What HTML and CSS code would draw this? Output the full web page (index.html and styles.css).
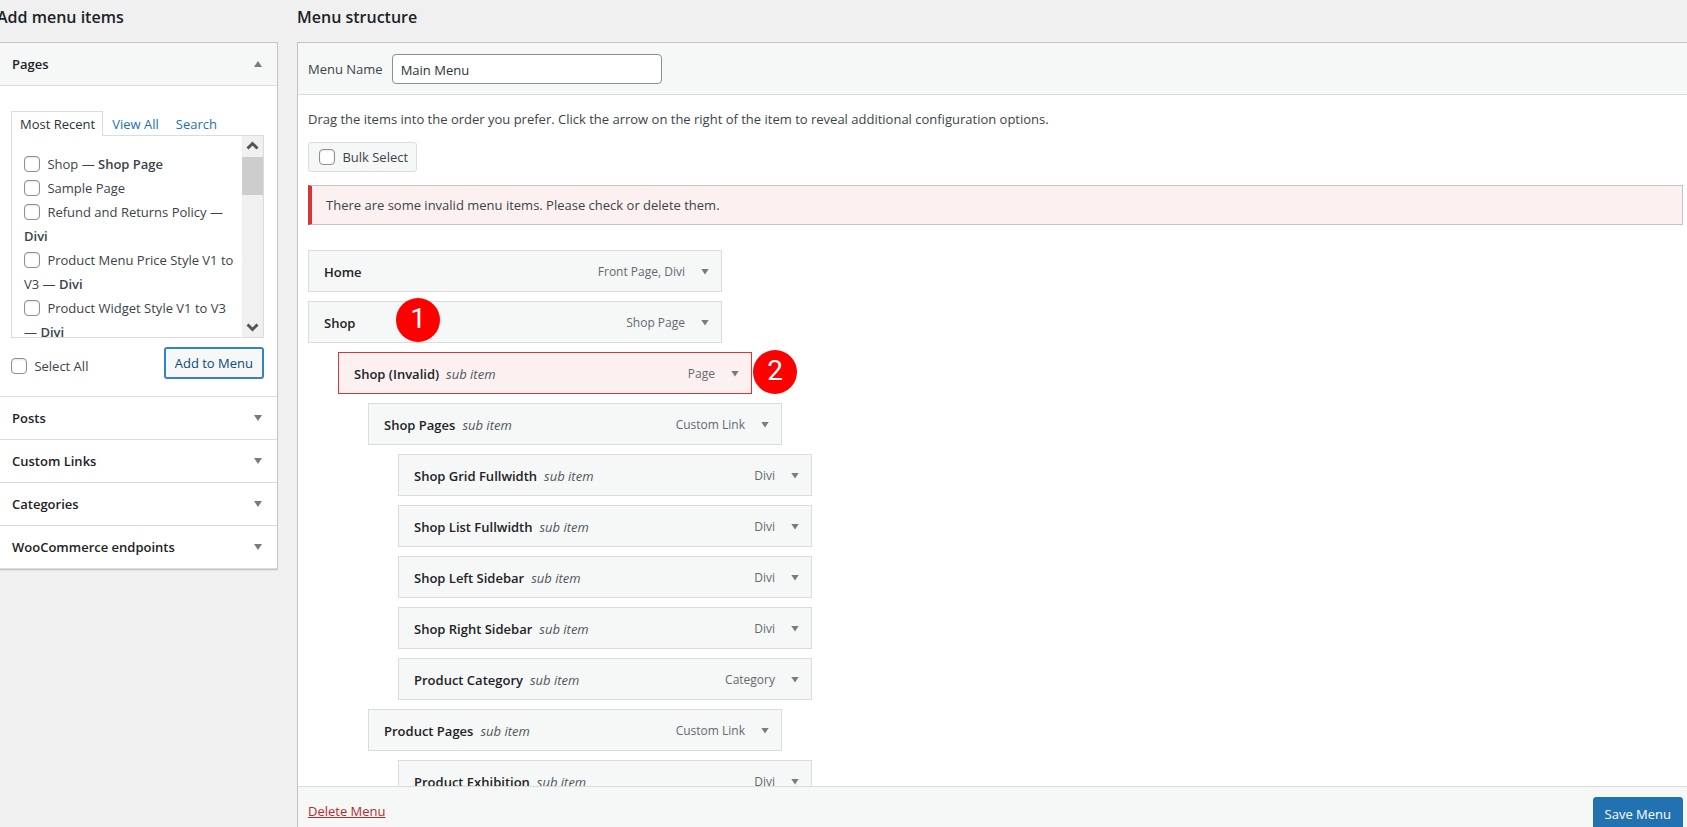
FILE: index.html
```html
<!DOCTYPE html>
<html lang="en">
<head>
  <meta charset="UTF-8">
  <title>Menus</title>
  <link rel="stylesheet" href="styles.css">
</head>
<body>

  <div class="wrap">

    <aside class="side">
      <h2>Add menu items</h2>
      <div class="accordion">
        <button type="button" class="section-title open">Pages <span class="arrow up"></span></button>

        <div class="section-content">
          <div class="tabs">
            <a class="tab active" href="#recent">Most Recent</a>
            <a class="tab" href="#all">View All</a>
            <a class="tab" href="#search">Search</a>
          </div>
          <div class="tab-panel" id="recent">
            <ul class="page-list">
              <li><label><input type="checkbox"> Shop — <b>Shop Page</b></label></li>
              <li><label><input type="checkbox"> Sample Page</label></li>
              <li><label><input type="checkbox"> Refund and Returns Policy — <b>Divi</b></label></li>
              <li><label><input type="checkbox"> Product Menu Price Style V1 to V3 — <b>Divi</b></label></li>
              <li><label><input type="checkbox"> Product Widget Style V1 to V3 — <b>Divi</b></label></li>
            </ul>
            <div class="scrollbar">
              <svg width="21" height="21" viewBox="0 0 21 21"><path d="M5.500 12.500 10.500 7.500 15.500 12.500" /></svg>
              <div class="thumb"></div>
              <svg width="21" height="21" viewBox="0 0 21 21"><path d="M5.500 8.500 10.500 13.500 15.500 8.500" /></svg>
            </div>
          </div>
          <div class="controls">
            <label><input type="checkbox"> Select All</label>
            <button type="button" class="button focused">Add to Menu</button>
          </div>
        </div>

        <button type="button" class="section-title">Posts <span class="arrow"></span></button>
        <button type="button" class="section-title">Custom Links <span class="arrow"></span></button>
        <button type="button" class="section-title">Categories <span class="arrow"></span></button>
        <button type="button" class="section-title">WooCommerce endpoints <span class="arrow"></span></button>
      </div>
    </aside>

    <main class="main">
      <h2>Menu structure</h2>
      <div class="menu-edit">
        <div class="menu-header">
          <label for="menu-name">Menu Name</label>
          <input type="text" id="menu-name" value="Main Menu">
        </div>

        <div class="menu-body">
          <p class="drag-text">Drag the items into the order you prefer. Click the arrow on the right of the item to reveal additional configuration options.</p>
          <label class="bulk"><input type="checkbox"> Bulk Select</label>
          <div class="notice">There are some invalid menu items. Please check or delete them.</div>

          <ul class="menu-items">
            <li class="item"><span class="title">Home</span><span class="type">Front Page, Divi</span><span class="arrow"></span></li>
            <li class="item"><span class="title">Shop</span><span class="type">Shop Page</span><span class="arrow"></span><span class="badge badge-one">1</span></li>
            <li class="item depth-1 invalid"><span class="title">Shop (Invalid)</span><i>sub item</i><span class="type">Page</span><span class="arrow"></span><span class="badge badge-two">2</span></li>
            <li class="item depth-2"><span class="title">Shop Pages</span><i>sub item</i><span class="type">Custom Link</span><span class="arrow"></span></li>
            <li class="item depth-3"><span class="title">Shop Grid Fullwidth</span><i>sub item</i><span class="type">Divi</span><span class="arrow"></span></li>
            <li class="item depth-3"><span class="title">Shop List Fullwidth</span><i>sub item</i><span class="type">Divi</span><span class="arrow"></span></li>
            <li class="item depth-3"><span class="title">Shop Left Sidebar</span><i>sub item</i><span class="type">Divi</span><span class="arrow"></span></li>
            <li class="item depth-3"><span class="title">Shop Right Sidebar</span><i>sub item</i><span class="type">Divi</span><span class="arrow"></span></li>
            <li class="item depth-3"><span class="title">Product Category</span><i>sub item</i><span class="type">Category</span><span class="arrow"></span></li>
            <li class="item depth-2"><span class="title">Product Pages</span><i>sub item</i><span class="type">Custom Link</span><span class="arrow"></span></li>
            <li class="item depth-3"><span class="title">Product Exhibition</span><i>sub item</i><span class="type">Divi</span><span class="arrow"></span></li>
          </ul>
        </div>

        <div class="menu-footer">
          <a href="#delete" class="delete">Delete Menu</a>
          <button type="button" class="button primary">Save Menu</button>
        </div>
      </div>
    </main>

  </div>

</body>
</html>
```
FILE: styles.css
```css
* {
  box-sizing: border-box;
}
body {
  margin: 0;
  background: #f0f0f0;
  color: #3c434a;
  font-family: "Open Sans", "Noto Sans", sans-serif;
  font-size: 13px;
  line-height: 20px;
  overflow: hidden;
}
ul {
  list-style: none;
  margin: 0;
  padding: 0;
}
h2 {
  margin: 0;
  padding: 5px 0 13px;
  font-size: 16px;
  line-height: 24px;
  font-weight: 600;
  color: #1d2327;
}
button {
  font: inherit;
  cursor: pointer;
}
b {
  font-weight: 600;
}
input[type="checkbox"] {
  appearance: none;
  width: 16px;
  height: 16px;
  margin: 0 4px 0 0;
  border: 1px solid #8c8f94;
  border-radius: 4px;
  background: #fff;
  box-shadow: inset 0 1px 2px rgba(0,0,0,0.1);
  vertical-align: -3px;
}
.arrow {
  width: 8px;
  height: 6px;
  background: #787c82;
  clip-path: polygon(0 0, 100% 0, 50% 100%);
}
.arrow.up {
  clip-path: polygon(0 100%, 100% 100%, 50% 0);
}

.wrap {
  display: flex;
  gap: 19px;
  height: 100vh;
}

/* left column */
.side {
  flex: none;
  width: 281px;
  margin-left: -3px;
}
.accordion {
  border: 1px solid #c3c4c7;
  background: #fff;
  box-shadow: 0 1px 1px rgba(0,0,0,0.04);
}
.section-title {
  display: flex;
  align-items: center;
  justify-content: space-between;
  width: 100%;
  height: 43px;
  padding: 0 15px 0 14px;
  border: 0;
  border-bottom: 1px solid #dcdcde;
  background: #fff;
  color: #1d2327;
  font-weight: 600;
}
.section-title.open {
  background: #f6f7f7;
}
.section-content {
  padding: 25px 13px 17px;
  border-bottom: 1px solid #dcdcde;
}
.tabs {
  display: flex;
  margin-bottom: -1px;
}
.tab {
  height: 25px;
  padding: 2px 7px 0 8px;
  border: 1px solid transparent;
  border-bottom: 0;
  color: #2271b1;
  text-decoration: none;
}
.tab.active {
  position: relative;
  border-color: #dcdcde;
  background: #fff;
  color: #2c3338;
}
.tab-panel {
  display: flex;
  height: 203px;
  border: 1px solid #dcdcde;
}
.page-list {
  flex: 1;
  padding: 16px 5px 0 12px;
  line-height: 24px;
  overflow: hidden;
}
.scrollbar {
  display: flex;
  flex-direction: column;
  justify-content: space-between;
  width: 21px;
  background: #f0f0f0;
}
.scrollbar path {
  fill: none;
  stroke: #555;
  stroke-width: 3;
}
.thumb {
  height: 38px;
  margin-bottom: auto;
  background: #cdcdcd;
}
.controls {
  display: flex;
  align-items: center;
  justify-content: space-between;
  padding-top: 9px;
}
.controls label {
  padding-top: 5px;
}
.button {
  height: 32px;
  padding: 0 11px;
  border: 1px solid #2271b1;
  border-radius: 3px;
  background: #f6f7f7;
  color: #0a4b78;
}
.button.focused {
  padding: 0 9px;
  border: 2px solid #3582c4;
}
.button.primary {
  height: 34px;
  background: #2271b1;
  color: #fff;
}

/* right column */
.main {
  display: flex;
  flex-direction: column;
  flex: 1;
  min-width: 0;
}
.menu-edit {
  display: flex;
  flex-direction: column;
  flex: 1;
  min-height: 0;
  border: 1px solid #c3c4c7;
  border-width: 1px 0 0 1px;
  background: #fff;
}
.menu-header {
  display: flex;
  align-items: center;
  gap: 9px;
  height: 52px;
  padding: 1px 10px 0;
  border-bottom: 1px solid #dcdcde;
  background: #f6f7f7;
}
.menu-header input {
  width: 270px;
  height: 30px;
  padding: 1px 8px 0;
  border: 1px solid #8c8f94;
  border-radius: 4px;
  background: #fff;
  color: #2c3338;
  font: inherit;
}
.menu-body {
  flex: 1;
  min-height: 0;
  padding: 14px 4px 0 10px;
  overflow: hidden;
}
.drag-text {
  margin: 0 0 13px;
}
.bulk {
  display: block;
  width: fit-content;
  height: 30px;
  padding: 4px 8px 4px 10px;
  border: 1px solid #dcdcde;
  border-radius: 3px;
  background: #f6f7f7;
}
.notice {
  margin: 13px 0 25px;
  padding: 9px 14px;
  border: 1px solid #c3c4c7;
  border-left: 4px solid #d63638;
  background: #fcf0f1;
}
.item {
  position: relative;
  display: flex;
  align-items: center;
  gap: 7px;
  width: 414px;
  height: 42px;
  margin-bottom: 9px;
  padding: 1px 12px 0 15px;
  border: 1px solid #dcdcde;
  background: #f6f7f7;
}
.item.invalid {
  border-color: #d63638;
  background: #fcf0f1;
}
.depth-1 {
  margin-left: 30px;
}
.depth-2 {
  margin-left: 60px;
}
.depth-3 {
  margin-left: 90px;
}
.title {
  color: #1d2327;
  font-weight: 600;
}
.item i {
  color: #50575e;
}
.type {
  margin-left: auto;
  margin-right: 9px;
  color: #646970;
  font-size: 12px;
}
.badge {
  position: absolute;
  z-index: 1;
  width: 44px;
  height: 44px;
  border-radius: 50%;
  background: #f00;
  color: #fff;
  font: 28px/42px Roboto, Arial, sans-serif;
  text-align: center;
}
.badge-one {
  top: -4px;
  left: 87px;
}
.badge-two {
  top: -3px;
  left: 414px;
}
.menu-footer {
  display: flex;
  align-items: flex-start;
  justify-content: space-between;
  height: 41px;
  padding: 10px 4px 0 10px;
  border-top: 1px solid #dcdcde;
  background: #f6f7f7;
  overflow: hidden;
}
.delete {
  padding-top: 4px;
  color: #b32d2e;
}
```
